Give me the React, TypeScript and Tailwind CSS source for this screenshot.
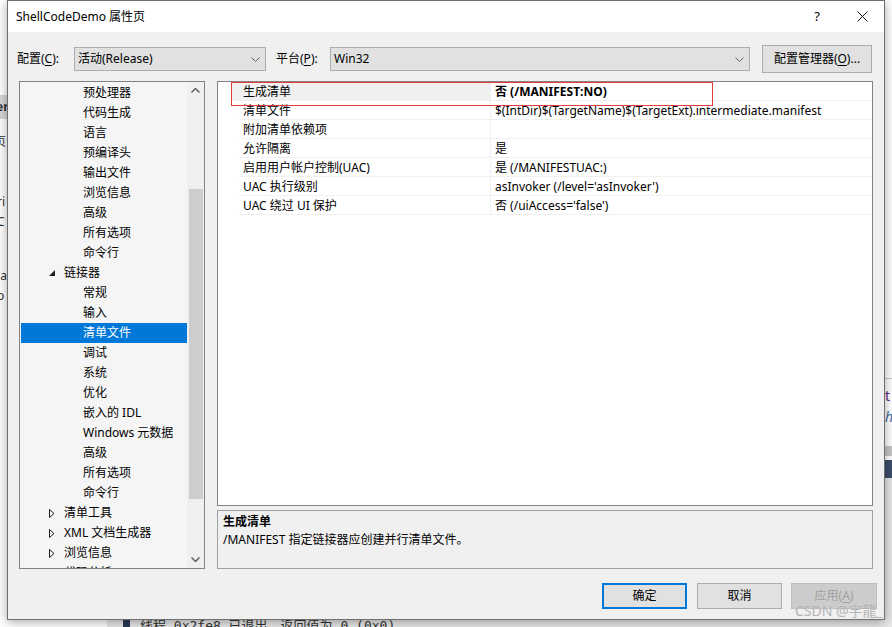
import React from "react";

const font = { fontFamily: '"Segoe UI", "Noto Sans", "Noto Sans CJK SC", sans-serif' };

type TreeItem = { label: string; level: 1 | 2; state?: "open" | "closed"; selected?: boolean };

const tree: TreeItem[] = [
    { label: "预处理器", level: 2 },
    { label: "代码生成", level: 2 },
    { label: "语言", level: 2 },
    { label: "预编译头", level: 2 },
    { label: "输出文件", level: 2 },
    { label: "浏览信息", level: 2 },
    { label: "高级", level: 2 },
    { label: "所有选项", level: 2 },
    { label: "命令行", level: 2 },
    { label: "链接器", level: 1, state: "open" },
    { label: "常规", level: 2 },
    { label: "输入", level: 2 },
    { label: "清单文件", level: 2, selected: true },
    { label: "调试", level: 2 },
    { label: "系统", level: 2 },
    { label: "优化", level: 2 },
    { label: "嵌入的 IDL", level: 2 },
    { label: "Windows 元数据", level: 2 },
    { label: "高级", level: 2 },
    { label: "所有选项", level: 2 },
    { label: "命令行", level: 2 },
    { label: "清单工具", level: 1, state: "closed" },
    { label: "XML 文档生成器", level: 1, state: "closed" },
    { label: "浏览信息", level: 1, state: "closed" },
    { label: "代码分析", level: 1, state: "closed" },
];

const props = [
    { name: "生成清单", value: "否 (/MANIFEST:NO)", selected: true },
    { name: "清单文件", value: "$(IntDir)$(TargetName)$(TargetExt).intermediate.manifest" },
    { name: "附加清单依赖项", value: "" },
    { name: "允许隔离", value: "是" },
    { name: "启用用户帐户控制(UAC)", value: "是 (/MANIFESTUAC:)" },
    { name: "UAC 执行级别", value: "asInvoker (/level='asInvoker')" },
    { name: "UAC 绕过 UI 保护", value: "否 (/uiAccess='false')" },
];

function Chevron() {
    return (
        <svg width="9" height="5" viewBox="0 0 9 5" className="shrink-0">
            <path d="M0.5 0.5 L4.5 4.5 L8.5 0.5" fill="none" stroke="#606060" strokeWidth="1" />
        </svg>
    );
}

function Combo({ text, width }: { text: string; width: string }) {
    return (
        <div className={`${width} h-[24px] bg-[#e1e1e1] border border-[#adadad] flex items-center justify-between pl-[3px] pr-[5px]`}>
            <span className="text-[12px] text-black leading-[22px]">{text}</span>
            <Chevron />
        </div>
    );
}

function Triangle({ state }: { state: "open" | "closed" }) {
    if (state === "open") {
        return (
            <svg width="6" height="6" viewBox="0 0 6 6">
                <path d="M6 0 L6 6 L0 6 Z" fill="#1e1e1e" />
            </svg>
        );
    }
    return (
        <svg width="6" height="9" viewBox="0 0 6 9">
            <path d="M0.5 0.5 L5 4.5 L0.5 8.5 Z" fill="none" stroke="#1e1e1e" strokeWidth="1" />
        </svg>
    );
}

function Button({ children, primary, disabled }: { children: React.ReactNode; primary?: boolean; disabled?: boolean }) {
    const cls = disabled
        ? "bg-[#cccccc] border border-[#bfbfbf] text-[#a0a0a0]"
        : primary
        ? "bg-[#e1e1e1] border-2 border-[#0078d7] text-black"
        : "bg-[#e1e1e1] border border-[#adadad] text-black";
    return (
        <div className={`h-[26px] flex items-center justify-center text-[12px] ${cls}`}>{children}</div>
    );
}

export default function App() {
    return (
        <div className="relative w-[892px] h-[627px] overflow-hidden bg-white" style={font}>
            {/* Visual Studio window behind the dialog */}
            <div className="absolute left-0 top-[95px] w-[7px] h-[24px] bg-[#d6d6d6] text-[12px] font-bold text-[#333] leading-[24px] overflow-hidden">
                <span className="-ml-[4px]">er</span>
            </div>
            <div className="absolute left-0 top-[134px] w-[7px] text-[12px] text-[#333] overflow-hidden leading-[16px]">
                <span className="-ml-[6px] block">页</span>
            </div>
            <div className="absolute left-0 top-[192px] w-[7px] text-[12px] text-[#333] overflow-hidden leading-[20px]">
                <span className="-ml-[3px] block">ri</span>
                <span className="-ml-[3px] block">C</span>
            </div>
            <div className="absolute left-0 top-[266px] w-[7px] text-[12px] text-[#333] overflow-hidden leading-[20px]">
                <span className="-ml-[3px] block">.a</span>
                <span className="-ml-[3px] block">o</span>
            </div>
            <div className="absolute left-[884px] top-[378px] w-[8px] h-[1px] bg-[#c8c8c8]" />
            <div className="absolute left-[884px] top-[386px] w-[8px] text-[14px] text-[#5b2a86] leading-[20px] overflow-hidden">
                <span className="ml-[1px]">t</span>
            </div>
            <div className="absolute left-[884px] top-[407px] w-[8px] text-[14px] italic text-[#3a6ea5] leading-[20px] overflow-hidden">
                <span className="ml-[1px]">h</span>
            </div>
            <div className="absolute left-[884px] top-[446px] w-[8px] h-[10px] bg-[#c6c6c6]" />
            <div className="absolute left-[884px] top-[460px] w-[8px] h-[18px] bg-[#3d4d6a]" />
            <div className="absolute left-[884px] top-[478px] w-[8px] h-[149px] bg-[#e6e6e6]" />
            <div className="absolute left-[107px] top-[619px] w-[785px] h-[8px] bg-[#e8e8e8]" />
            <div className="absolute left-[123px] top-[619px] w-[7px] h-[8px] bg-[#2b3a55]" />
            <div className="absolute left-[140px] top-[616px] text-[13px] leading-[20px] text-[#333] whitespace-nowrap" style={{ fontFamily: '"DejaVu Sans Mono", "Noto Sans CJK SC", monospace' }}>
                线程 0x2fe8 已退出，返回值为 0 (0x0)。
            </div>

            {/* Dialog */}
            <div className="absolute left-[7px] top-0 w-[878px] h-[620px] bg-[#f0f0f0] border border-[#6f6f6f] shadow-[0_2px_10px_rgba(0,0,0,0.35)] flex flex-col">
                <div className="h-[31px] bg-white flex items-center shrink-0">
                    <span className="ml-[8px] text-[12px] text-black">ShellCodeDemo 属性页</span>
                    <span className="ml-auto text-[13px] text-black mr-[37px]">?</span>
                    <svg width="11" height="11" viewBox="0 0 11 11" className="mr-[16px]">
                        <path d="M0.5 0.5 L10.5 10.5 M10.5 0.5 L0.5 10.5" stroke="#111" strokeWidth="1" />
                    </svg>
                </div>

                <div className="flex items-center h-[28px] mt-[13px] shrink-0 text-[12px] text-black">
                    <span className="ml-[9px] w-[57px]">
                        配置(<span className="underline underline-offset-2">C</span>):
                    </span>
                    <Combo text="活动(Release)" width="w-[192px]" />
                    <span className="ml-[10px] w-[54px]">
                        平台(<span className="underline underline-offset-2">P</span>):
                    </span>
                    <Combo text="Win32" width="w-[420px]" />
                    <div className="ml-[12px] w-[110px] h-[28px] bg-[#e1e1e1] border border-[#adadad] flex items-center justify-center">
                        配置管理器(<span className="underline underline-offset-2">O</span>)...
                    </div>
                </div>

                <div className="flex mt-[8px] h-[488px] shrink-0">
                    {/* Tree */}
                    <div className="ml-[11px] w-[186px] h-full border border-[#828282] bg-[#f5f5f5] flex overflow-hidden">
                        <div className="flex-1 pt-[1px] pl-[1px] overflow-hidden">
                            {tree.map((t, i) => (
                                <div
                                    key={i}
                                    className={`h-[20px] flex items-center text-[12px] whitespace-nowrap ${t.selected ? "bg-[#0078d7] text-white" : "text-black"} ${t.level === 2 ? "pl-[62px]" : "pl-[28px]"}`}
                                >
                                    {t.state && (
                                        <span className="w-[15px] flex items-center">
                                            <Triangle state={t.state} />
                                        </span>
                                    )}
                                    {t.label}
                                </div>
                            ))}
                        </div>
                        <div className="w-[17px] bg-[#f0f0f0] flex flex-col items-center">
                            <div className="h-[17px] flex items-center justify-center">
                                <svg width="9" height="5" viewBox="0 0 9 5">
                                    <path d="M0.5 4.5 L4.5 0.5 L8.5 4.5" fill="none" stroke="#606060" strokeWidth="1.5" />
                                </svg>
                            </div>
                            <div className="h-[90px]" />
                            <div className="w-[14px] h-[310px] bg-[#cdcdcd]" />
                            <div className="flex-1" />
                            <div className="h-[17px] flex items-center justify-center">
                                <svg width="9" height="5" viewBox="0 0 9 5">
                                    <path d="M0.5 0.5 L4.5 4.5 L8.5 0.5" fill="none" stroke="#606060" strokeWidth="1.5" />
                                </svg>
                            </div>
                        </div>
                    </div>

                    {/* Right side */}
                    <div className="ml-[12px] w-[656px] flex flex-col gap-[4px]">
                        <div className="relative h-[425px] border border-[#828282] bg-white">
                            {props.map((p, i) => (
                                <div key={i} className="flex h-[19px] text-[12px] text-black">
                                    <div className="w-[14px]" />
                                    <div className={`w-[7px] ${p.selected ? "bg-[#f0f0f0]" : ""}`} />
                                    <div className="flex-1 flex border-b border-[#f0f0f0]">
                                        <div className={`w-[252px] pl-[4px] pt-[2px] flex items-center border-r border-[#f0f0f0] ${p.selected ? "bg-[#f0f0f0]" : ""}`}>{p.name}</div>
                                        <div className={`flex-1 pl-[4px] pt-[2px] flex items-center whitespace-nowrap ${p.selected ? "font-bold" : ""}`}>{p.value}</div>
                                    </div>
                                </div>
                            ))}
                            <div className="absolute left-[13px] top-0 w-[482px] h-[24px] border border-[#e53c3c]" />
                        </div>
                        <div className="h-[59px] border border-[#a0a0a0] bg-[#f0f0f0] pl-[5px] pt-[2px] text-[12px] leading-[18px] text-black">
                            <div className="font-bold">生成清单</div>
                            <div>/MANIFEST 指定链接器应创建并行清单文件。</div>
                        </div>
                    </div>
                </div>

                <div className="flex mt-[14px] shrink-0">
                    <div className="ml-[594px] w-[85px]">
                        <Button primary>确定</Button>
                    </div>
                    <div className="ml-[10px] w-[85px]">
                        <Button>取消</Button>
                    </div>
                    <div className="ml-[9px] w-[86px]">
                        <Button disabled>
                            应用(<span className="underline underline-offset-2">A</span>)
                        </Button>
                    </div>
                </div>
            </div>

            <div className="absolute left-[795px] top-[601px] text-[14px] leading-[20px] text-[#b4b4b4] whitespace-nowrap">
                CSDN @宇龍_
            </div>
        </div>
    );
}
